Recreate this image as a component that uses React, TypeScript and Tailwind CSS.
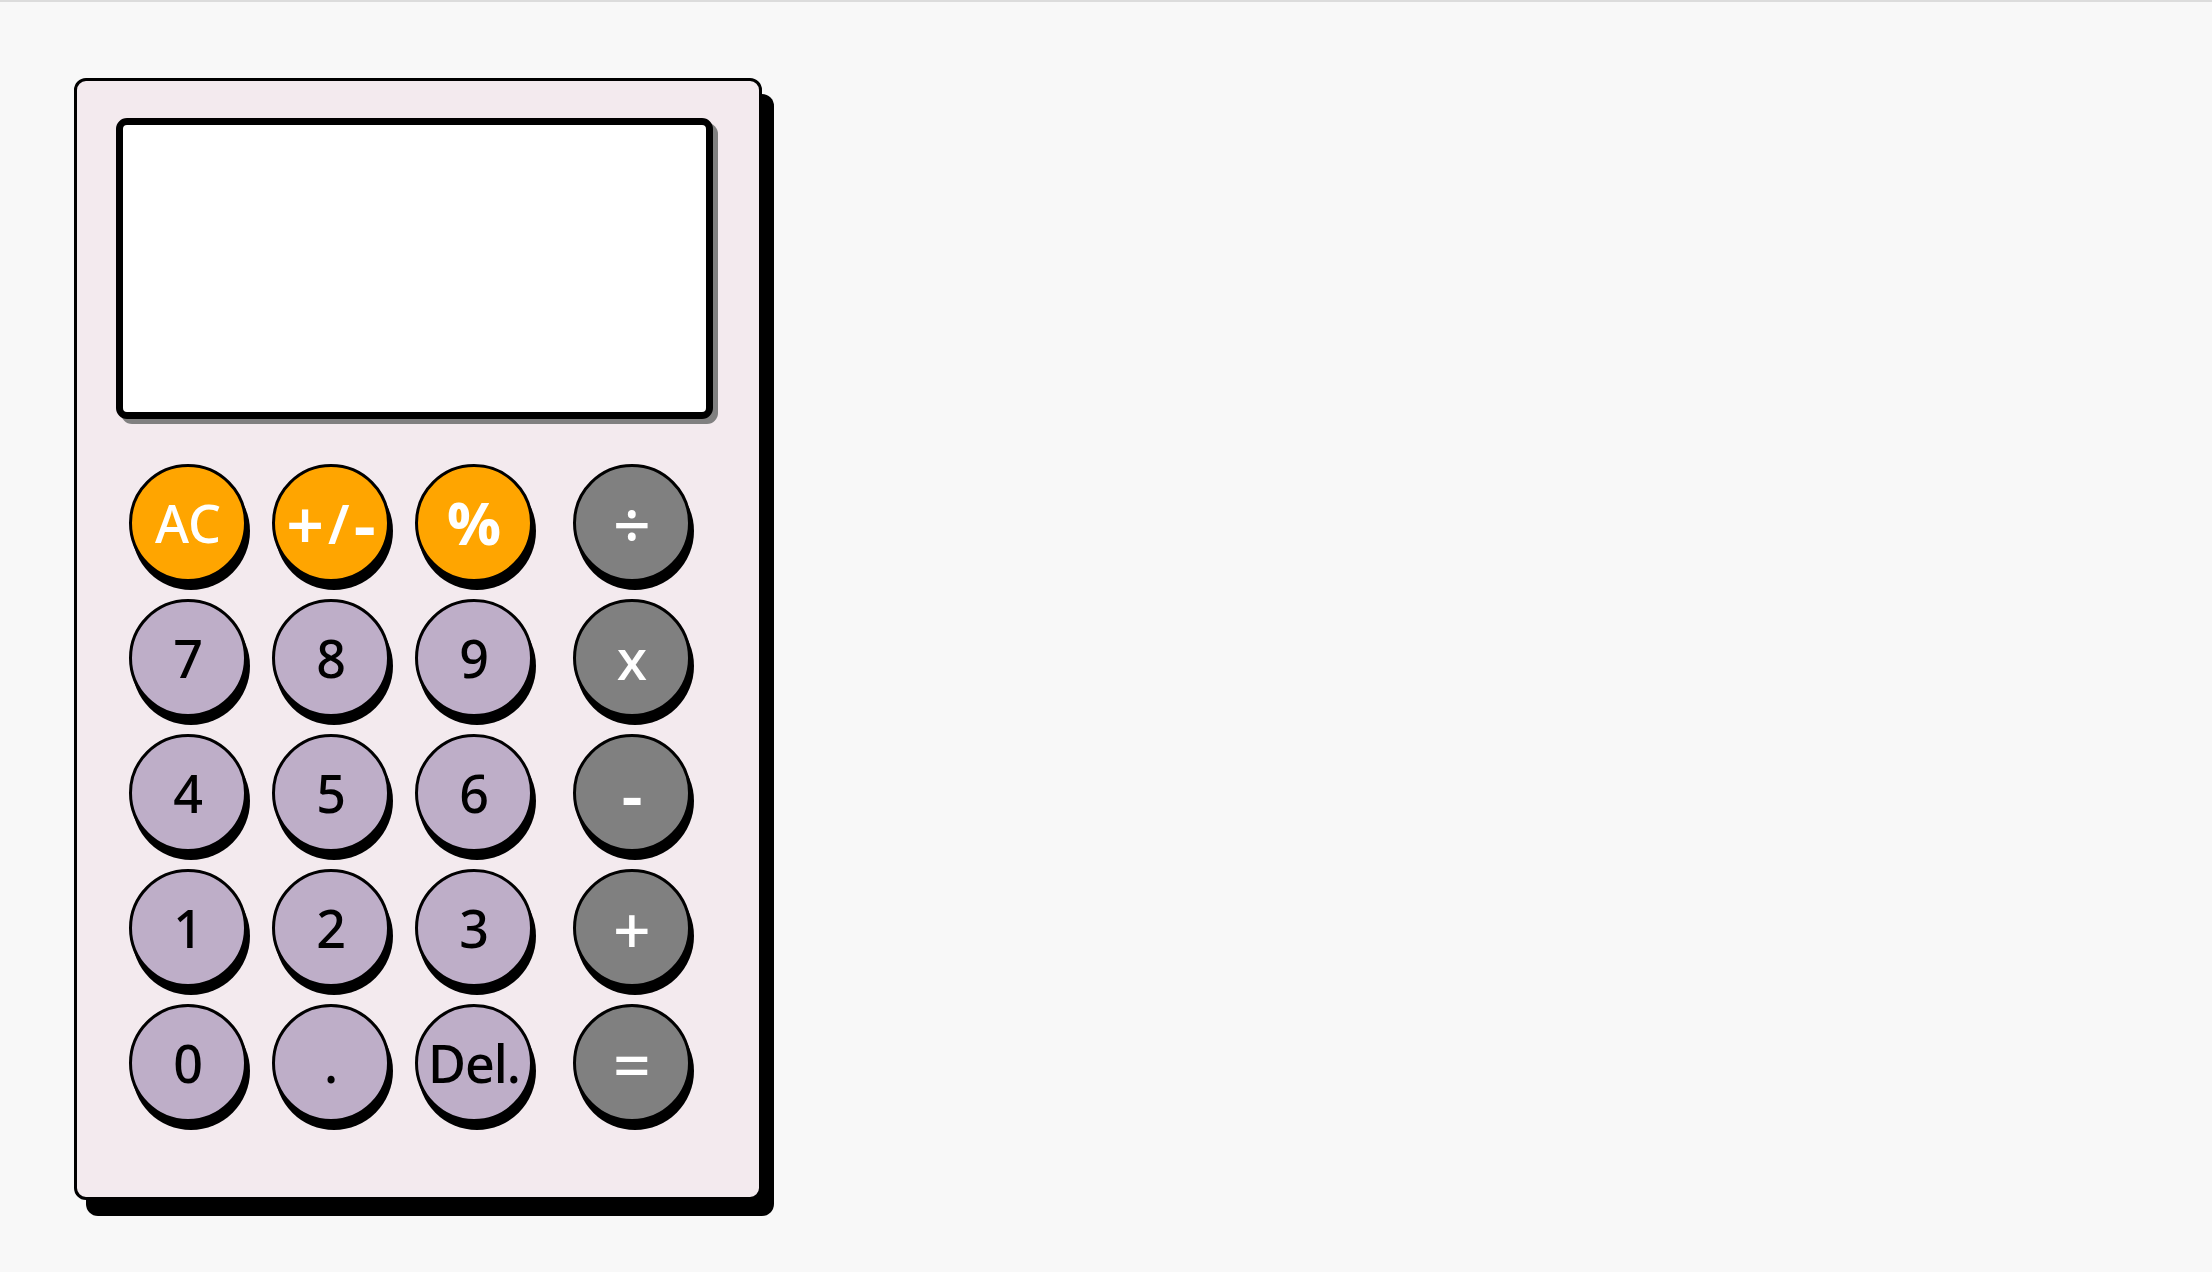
import React from "react";

type Key = {
  label: React.ReactNode;
  kind: "orange" | "purple" | "gray";
  cls?: string;
};

const rows: Key[][] = [
  [
    { label: "AC", kind: "orange", cls: "font-medium text-[52px]" },
    {
      label: (
        <span className="flex items-center gap-[4px] font-semibold">
          <span className="text-[66px] leading-none">+</span>
          <span className="text-[54px] leading-none">/</span>
          <span className="text-[70px] leading-none">-</span>
        </span>
      ),
      kind: "orange",
    },
    { label: "%", kind: "orange", cls: "font-extrabold text-[58px]" },
    { label: "÷", kind: "gray", cls: "font-medium text-[66px]" },
  ],
  [
    { label: "7", kind: "purple" },
    { label: "8", kind: "purple" },
    { label: "9", kind: "purple" },
    { label: "x", kind: "gray", cls: "font-medium text-[56px]" },
  ],
  [
    { label: "4", kind: "purple" },
    { label: "5", kind: "purple" },
    { label: "6", kind: "purple" },
    { label: "-", kind: "gray", cls: "font-semibold text-[66px]" },
  ],
  [
    { label: "1", kind: "purple" },
    { label: "2", kind: "purple" },
    { label: "3", kind: "purple" },
    { label: "+", kind: "gray", cls: "font-medium text-[66px]" },
  ],
  [
    { label: "0", kind: "purple" },
    { label: ".", kind: "purple" },
    { label: "Del.", kind: "purple", cls: "font-medium text-[52px] tracking-[-1px]" },
    { label: "=", kind: "gray", cls: "font-medium text-[66px]" },
  ],
];

function KeyButton({ k, last }: { k: Key; last: boolean }) {
  const color =
    k.kind === "orange"
      ? "bg-[#ffa500] text-white"
      : k.kind === "purple"
      ? "bg-[#beaec8] text-black"
      : "bg-[#808080] text-white";
  return (
    <button
      className={`${color} ${last ? "ml-[15px]" : ""} ${
        k.cls ?? "font-medium text-[52px]"
      } w-[118px] h-[118px] shrink-0 rounded-full border-[3px] border-black shadow-[3px_8px_0_#000] flex items-center justify-center leading-none`}
      style={{ fontFamily: '"Noto Sans", "Open Sans", sans-serif' }}
    >
      {k.label}
    </button>
  );
}

export default function App() {
  return (
    <div
      className="min-h-screen bg-[#f8f8f8] border-t-2 border-[#dcdcdc]"
      style={{ fontFamily: '"Noto Sans", sans-serif' }}
    >
      <div className="pt-[76px] pl-[74px]">
        <div className="w-[688px] h-[1122px] border-[3px] border-black rounded-[12px] bg-[#f3eaee] shadow-[12px_16px_0_#000] pl-[39px] pt-[37px]">
          <div className="w-[597px] h-[301px] border-[7px] border-black rounded-[11px] bg-white shadow-[5px_5px_0_#808080]" />
          <div className="mt-[45px] ml-[13px] flex flex-col gap-[17px]">
            {rows.map((row, ri) => (
              <div key={ri} className="flex gap-[25px]">
                {row.map((k, ci) => (
                  <KeyButton key={ci} k={k} last={ci === 3} />
                ))}
              </div>
            ))}
          </div>
        </div>
      </div>
    </div>
  );
}
